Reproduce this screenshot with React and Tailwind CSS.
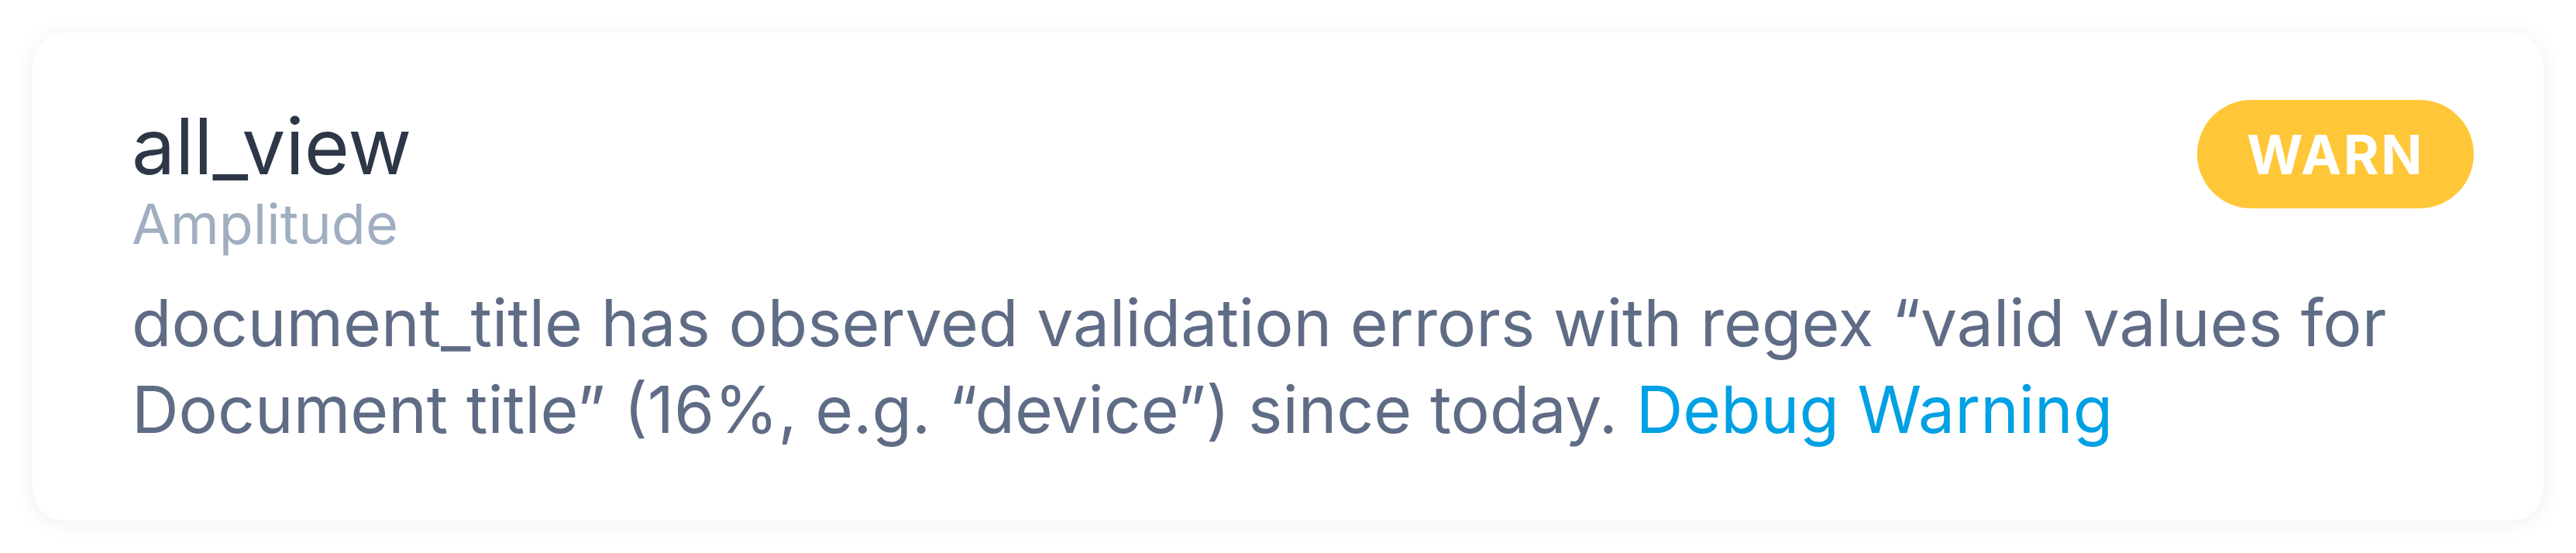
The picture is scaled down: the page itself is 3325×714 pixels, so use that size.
export default function App() {
  return (
    <div className="min-h-[714px] w-[3325px] bg-white px-[42px] pt-[42px] font-['Inter',sans-serif]">
      <div className="rounded-[42px] bg-white pt-[97px] pb-[87px] pl-[128px] pr-[90px] shadow-[0_3px_22px_6px_rgba(0,0,0,0.045)]">
        <div className="flex items-start justify-between">
          <div className="flex flex-col">
            <div className="text-[100px] leading-[100px] text-[#2d3748]">all_view</div>
            <div className="mt-[14px] text-[72px] leading-[72px] text-[#a0aec0]">Amplitude</div>
          </div>
          <span className="mt-[-10px] flex h-[140px] items-center rounded-full bg-[#ffc738] px-[64px] text-[70px] font-bold tracking-[0.035em] text-white">
            WARN
          </span>
        </div>
        <p className="mt-[36px] pr-[38px] text-[84px] leading-[112px] text-[#5f6c86]">
          document_title has observed validation errors with regex “valid values for Document title” (16%, e.g. “device”) since today.{" "}
          <a href="#" className="text-[#00a0e4]">Debug Warning</a>
        </p>
      </div>
    </div>
  );
}
